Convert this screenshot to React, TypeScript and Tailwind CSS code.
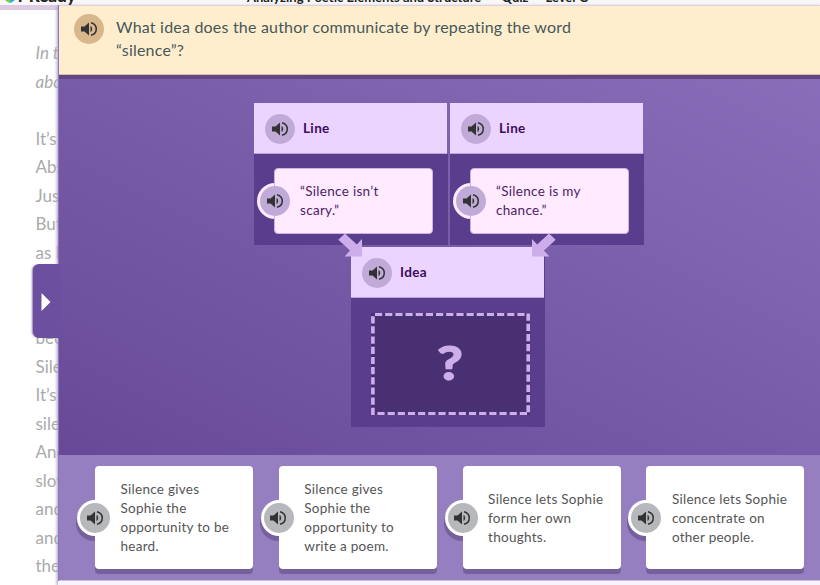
import clsx from "clsx";

// empty rows are the ones hidden by the drawer tab
const passage = ["It’s", "Abs", "Just", "But", "as l", "", "", "bec", "Sile", "It’s", "sile", "And", "slow", "and", "and", "the"];

const answers = [
  ["Silence gives", "Sophie the", "opportunity to be", "heard."],
  ["Silence gives", "Sophie the", "opportunity to", "write a poem."],
  ["Silence lets Sophie", "form her own", "thoughts."],
  ["Silence lets Sophie", "concentrate on", "other people."],
];

function Speaker({ className }: { className?: string }) {
  return (
    <button className={clsx("flex size-[30px] shrink-0 items-center justify-center rounded-full pr-px", className)}>
      <svg width="16" height="16" viewBox="0 0 16 16" fill="none">
        <path d="M0 5.5H3.5L8 1.6V14.4L3.5 10.5H0Z" fill="#333" />
        <path d="M9.5 5C11.7 6.2 11.7 9.8 9.5 11Z" fill="#333" />
        <path d="M10 1.7C17 3.5 17 12.5 10 14.3" stroke="#333" strokeWidth="1.5" />
      </svg>
    </button>
  );
}

function ColumnHeader({ title }: { title: string }) {
  return (
    <div className="flex h-[51px] w-[193px] items-center gap-2 border-b border-[#bda5dc] bg-[#ebd5ff] pt-px pl-[11px]">
      <Speaker className="bg-[#c0abd8]" />
      <span className="text-[13.5px] font-bold tracking-[0.35px] text-[#3d0b5c]">{title}</span>
    </div>
  );
}

function LineColumn({ lines }: { lines: string[] }) {
  return (
    <div className="w-[194px]">
      <ColumnHeader title="Line" />
      <div className="h-[91px] bg-[#5a3e8e] pt-[14px] pl-[3px]">
        <div className="flex h-[66px] items-center">
          <div className="-mr-[19px] rounded-full bg-[#ffeaff] p-[3px]">
            <Speaker className="relative z-10 bg-[#c0abd8]" />
          </div>
          <div className="flex h-full w-[159px] flex-col justify-center rounded border border-[#cdb4dc] bg-[#ffeaff] pl-[25px] text-[13.5px] leading-[19px] tracking-[0.3px] text-[#4b1d66]">
            {lines.map((l) => (
              <p key={l}>{l}</p>
            ))}
          </div>
        </div>
      </div>
    </div>
  );
}

function Arrow({ className }: { className?: string }) {
  return (
    <svg className={className} width="24" height="24" viewBox="0 0 24 24" fill="#ceaeea">
      <path d="M7 0.5L18.8 11.4L24 6V23.5H6.6L12 17.6L0.3 6.8Z" />
    </svg>
  );
}

function DropZone() {
  return (
    <div className="relative flex h-[102px] w-[159px] items-center justify-center bg-[#483072]">
      <svg className="absolute inset-0" width="159" height="102" fill="none" stroke="#ceaeea" strokeDasharray="7.2 2.97">
        <path d="M4 1.5H156" strokeWidth="3" />
        <path d="M6.4 100.5H157" strokeWidth="3" />
        <path d="M1.9 3.2V102" strokeWidth="3.6" />
        <path d="M157.2 0.6V100" strokeWidth="3.6" />
      </svg>
      <span className="scale-x-120 pb-1 text-[45px] leading-none text-[#ceaeea] [-webkit-text-stroke:3px_#ceaeea] [stroke-linejoin:round]">?</span>
    </div>
  );
}

function AnswerCard({ lines }: { lines: string[] }) {
  return (
    <div className="flex h-[103px] w-[176px] shrink-0 items-center">
      <div className="-mr-[18px] rounded-full bg-white p-[3px] shadow-[-1px_5px_0_#76609c]">
        <Speaker className="relative z-10 bg-[#b7b8bc]" />
      </div>
      <div className="flex h-full w-[158px] flex-col justify-center rounded bg-white pt-px pl-[25.5px] text-[13.5px] leading-[19px] tracking-[0.27px] text-[#555] shadow-[0_5px_0_#76609c]">
        {lines.map((l) => (
          <p key={l} className="whitespace-nowrap">{l}</p>
        ))}
      </div>
    </div>
  );
}

export default function App() {
  return (
    <div className="relative flex h-[585px] w-[820px] flex-col overflow-hidden bg-white font-['Lato',sans-serif]">
      <header className="flex h-[5px] shrink-0 items-end overflow-hidden bg-[#f8f8f8] text-[#222] whitespace-nowrap">
        <svg className="ml-[5px] self-start" width="10" height="3" viewBox="0 0 10 3">
          <path d="M0 0H5V3Q2 2 0 0Z" fill="#7ac943" />
          <path d="M5 0H10Q8 2 5 3Z" fill="#29b6d1" />
        </svg>
        <span className="ml-[3px] w-[229px] pb-px text-[17px] leading-[17px] font-black">i-Ready</span>
        <span className="pb-px text-[13px] leading-[13px] font-bold">Analyzing Poetic Elements and Structure &nbsp;–&nbsp; Quiz &nbsp;– Level G</span>
      </header>

      <div className="flex flex-1">
        <aside className="h-[580px] w-[58px] shrink-0 overflow-hidden border-t-[5px] border-[#dccbe3]">
          <article className="pt-[29px] pl-[35.5px] text-[17px] leading-[28.5px] text-[#aaa] whitespace-nowrap">
            <p className="italic">In t</p>
            <p className="mb-[28.5px] italic">abo</p>
            {passage.map((l, i) => (
              <p key={i} className="h-[28.5px]">{l}</p>
            ))}
          </article>
        </aside>

        <div className="z-10 flex-1 bg-[#f7f5f9] shadow-[-1px_1px_3px_#a99bc2]">
          <main className="flex h-[576px] flex-col border-l border-[#8d78b5]">
            <div className="flex h-[70px] shrink-0 gap-3 border-t border-b border-t-[#e2d0dc] border-b-[#d8c0a6] bg-[#ffeecd] pt-2 pl-[15px]">
              <Speaker className="bg-[#d9b78d]" />
              <p className="pt-px text-[16px] leading-[23px] tracking-[0.2px] text-[#46585a]">
                What idea does the author communicate by repeating the word
                <br />
                “silence”?
              </p>
            </div>

            <section className="flex-1 border-t-4 border-[#614885] bg-linear-to-tr from-[#674998] to-[#886eb9] pt-6 pl-[195px]">
              <div className="flex gap-[2px]">
                <LineColumn lines={["“Silence isn’t", "scary.”"]} />
                <LineColumn lines={["“Silence is my", "chance.”"]} />
              </div>
              <div className="relative mt-[2px] ml-[97px] w-[194px] bg-[#5a3e8e]">
                <ColumnHeader title="Idea" />
                <Arrow className="absolute -top-[14px] -left-[13px]" />
                <Arrow className="absolute -top-[14px] left-[181px] -scale-x-100" />
                <div className="h-[129px] pt-[15px] pl-5">
                  <DropZone />
                </div>
              </div>
            </section>

            <section className="flex h-[126px] shrink-0 gap-[7.8px] border-b border-[#c9bde0] bg-[#967fc1] pt-[11px] pl-[18px]">
              {answers.map((a, i) => (
                <AnswerCard key={i} lines={a} />
              ))}
            </section>
          </main>
        </div>
      </div>

      {/* drawer tab */}
      <button className="absolute top-[264px] left-[33px] z-20 flex h-[74px] w-[27px] items-center rounded-l-md bg-[#6c4f9e] pt-0.5 pl-2 shadow-[-2px_0_2px_-1px_#8f7cb0]">
        <svg width="10" height="18" viewBox="0 0 10 18">
          <path d="M0.5 0L9.5 9L0.5 18Z" fill="#fff" />
        </svg>
      </button>
    </div>
  );
}
